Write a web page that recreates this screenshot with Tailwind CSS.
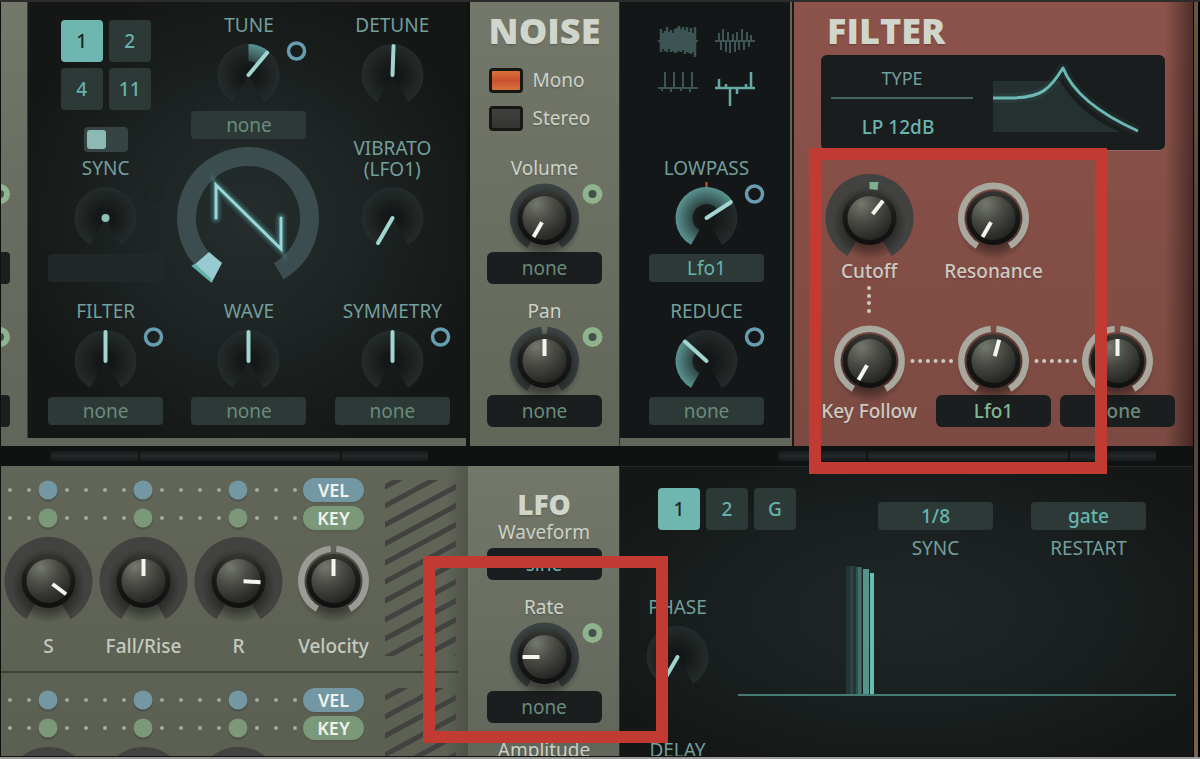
<!DOCTYPE html>
<html lang="en">
<head>
  <meta charset="UTF-8" />
  <meta name="viewport" content="width=device-width, initial-scale=1" />
  <title>Synth - Noise, Filter & LFO</title>
  <script src="https://cdn.jsdelivr.net/npm/@tailwindcss/browser@4"></script>
</head>
<body class="h-screen overflow-hidden bg-[#0e1010] font-['Noto_Sans','Open_Sans',sans-serif] text-[19px] leading-6">

  <!-- Shared gradients -->
  <svg class="absolute w-0 h-0" aria-hidden="true">
    <defs>
      <radialGradient id="glass" gradientUnits="userSpaceOnUse" cx="0" cy="0" r="31">
        <stop offset="0.25" stop-color="#141717" /><stop offset="1" stop-color="#252c2b" />
      </radialGradient>
      <radialGradient id="glow" gradientUnits="userSpaceOnUse" cx="0" cy="0" r="31">
        <stop offset="0.4" stop-color="#2b3f3e" /><stop offset="1" stop-color="#5a9492" />
      </radialGradient>
      <radialGradient id="cap" gradientUnits="userSpaceOnUse" cx="-8" cy="-14" r="36">
        <stop offset="0" stop-color="#74786d" /><stop offset="0.5" stop-color="#484a44" /><stop offset="1" stop-color="#272825" />
      </radialGradient>
      <radialGradient id="shade" gradientUnits="userSpaceOnUse" cx="0" cy="5" r="37">
        <stop offset="0.65" stop-color="#0c0d0c" stop-opacity="0.75" /><stop offset="1" stop-color="#0c0d0c" stop-opacity="0" />
      </radialGradient>
      <linearGradient id="rim" x1="0" y1="0" x2="0" y2="1">
        <stop offset="0" stop-color="#363632" /><stop offset="0.4" stop-color="#1b1b19" /><stop offset="1" stop-color="#0f100f" />
      </linearGradient>
    </defs>
  </svg>

  <div class="relative h-screen flex flex-col border-t-2 border-b-2 border-t-[#2b2c2b] border-b-[#9a9b99]">
    <div class="flex-1 min-h-0 flex pl-px">
      <main class="flex-1 min-w-0 flex flex-col">

        <!-- Upper row -->
        <div class="flex shrink-0 h-[444px]">

          <!-- Oscillator -->
          <section class="w-[469px] shrink-0 flex pb-2 border-r-4 border-[#121413] bg-linear-to-b from-[#74786b] via-[#686c60] to-[#62665a]">
            <div class="w-[27px] shrink-0 overflow-hidden border-r border-[#3a3d37]">
              <svg width="27" height="436" viewBox="0 0 27 436">
                <circle cx="-1" cy="192" r="7" fill="#44504a" stroke="#90b48e" stroke-width="6" />
                <rect x="-20" y="250" width="29" height="32" rx="4" fill="#1b1f1f" />
                <circle cx="-1" cy="335" r="7" fill="#44504a" stroke="#90b48e" stroke-width="6" />
                <rect x="-20" y="393" width="29" height="32" rx="4" fill="#1b1f1f" />
              </svg>
            </div>
            <div class="flex-1 grid grid-cols-3 pl-[6px] pr-[2px] pt-[11px] text-[#739f9d] bg-[radial-gradient(ellipse_at_center,#252e2d_0%,#1e2524_35%,#141716_78%)]">
              <div class="flex flex-col items-center">
                <div class="h-[143px] pt-[7px] flex flex-col items-center">
                  <div class="grid grid-cols-2 gap-[6px] font-medium text-[#65b2ab]">
                    <button class="size-[42px] rounded bg-[#6fb6b1] text-[#1c2625]">1</button>
                    <button class="size-[42px] rounded bg-[#2c3937]">2</button>
                    <button class="size-[42px] rounded bg-[#2c3937]">4</button>
                    <button class="size-[42px] rounded bg-[#2c3937]">11</button>
                  </div>
                  <label class="mt-[17px] relative block w-11 h-[25px] rounded bg-[#364443] p-[3px]">
                    <input type="checkbox" aria-label="Sync" class="appearance-none block size-[19px] rounded-[3px] bg-[#8db9b4]" />
                  </label>
                </div>
                <label class="flex flex-col items-center text-center"><span class="h-6">SYNC</span>
                  <span class="knob relative block" data-kind="dot" data-angle="0"></span></label>
                <div class="w-[115px] h-7 rounded bg-[#212928]"></div>
                <div class="h-[17px]"></div>
                <label class="flex flex-col items-center"><span class="h-6">FILTER</span>
                  <span class="knob relative block" data-kind="glass" data-angle="0" data-ring="blue"></span></label>
                <select aria-label="Filter modulation" class="appearance-none w-[115px] h-7 rounded bg-[#2c3937] text-[#6b8b7a] text-center [text-align-last:center]"><option>none</option></select>
              </div>
              <div class="flex flex-col items-center">
                <label class="flex flex-col items-center"><span class="h-6">TUNE</span>
                  <span class="knob relative block" data-kind="glass" data-angle="40" data-from="0" data-ring="blue"></span></label>
                <select aria-label="Tune modulation" class="appearance-none w-[115px] h-7 rounded bg-[#2c3937] text-[#6b8b7a] text-center [text-align-last:center]"><option>none</option></select>
                <!-- Wave shape dial -->
                <svg class="block shrink-0" width="143" height="160" viewBox="-71 -79 143 160">
                  <path d="M-35.5 61.5A71 71 0 1 1 35.5 61.5L26 45A52 52 0 1 0 -26 45Z" fill="#3b4d4e" />
                  <path d="M-39 34L-26 45L-36 64L-55 48Z" fill="#97cbcf" />
                  <path d="M-55 48L-36 64L-38 61L-53 47Z" stroke="#5fb3a8" stroke-width="2" fill="none" />
                  <g fill="none" stroke-linecap="round">
                    <path d="M-32 0V-33L33 31V0" stroke="#5aa0a4" stroke-opacity="0.15" stroke-width="12" />
                    <path d="M-32 0V-33L33 31V0" stroke="#5aa0a4" stroke-opacity="0.35" stroke-width="7" />
                    <path d="M-32 0V-33L33 31V0" stroke="#9bd6d8" stroke-width="3" />
                  </g>
                </svg>
                <label class="flex flex-col items-center"><span class="h-6">WAVE</span>
                  <span class="knob relative block" data-kind="glass" data-angle="0"></span></label>
                <select aria-label="Wave modulation" class="appearance-none w-[115px] h-7 rounded bg-[#2c3937] text-[#6b8b7a] text-center [text-align-last:center]"><option>none</option></select>
              </div>
              <div class="flex flex-col items-center">
                <label class="h-[143px] flex flex-col items-center"><span class="h-6">DETUNE</span>
                  <span class="knob relative block" data-kind="glass" data-angle="2"></span></label>
                <label class="h-[143px] flex flex-col items-center">
                  <span class="h-6 flex flex-col justify-end text-center leading-[21px]"><span>VIBRATO</span><span>(LFO1)</span></span>
                  <span class="knob relative block" data-kind="glass" data-angle="-150"></span></label>
                <label class="flex flex-col items-center"><span class="h-6">SYMMETRY</span>
                  <span class="knob relative block" data-kind="glass" data-angle="0" data-ring="blue"></span></label>
                <select aria-label="Symmetry modulation" class="appearance-none w-[115px] h-7 rounded bg-[#2c3937] text-[#6b8b7a] text-center [text-align-last:center]"><option>none</option></select>
              </div>
            </div>
          </section>

          <!-- Noise -->
          <section class="w-[150px] shrink-0 flex flex-col items-center pt-[9px] text-[#cdd2c7] text-shadow-sm bg-linear-to-b from-[#74786b] via-[#6b6f62] to-[#626659] border-r border-[#2b2e2a]">
            <h2 class="h-10 font-['Open_Sans'] font-extrabold text-[36px] leading-10 text-[#d0d6cb]">NOISE</h2>
            <div class="w-28 mt-[17px] flex flex-col gap-[14px]">
              <label class="h-6 flex items-center gap-[10px]">
                <input type="radio" name="noise" class="appearance-none w-[34px] h-[25px] rounded border-3 border-[#171714] bg-linear-to-b from-[#d8733a] via-[#c94f30] to-[#d8733a]" checked />Mono</label>
              <label class="h-6 flex items-center gap-[10px]">
                <input type="radio" name="noise" class="appearance-none w-[34px] h-[25px] rounded border-3 border-[#171714] bg-linear-to-b from-[#40403e] to-[#343432]" />Stereo</label>
            </div>
            <label class="mt-[26px] flex flex-col items-center"><span class="h-6">Volume</span>
              <span class="knob relative block" data-kind="dark" data-angle="-150" data-ring="green"></span></label>
            <select aria-label="Volume modulation" class="appearance-none w-[115px] h-8 rounded-md bg-[#1a1e1e] text-[#6b8b7a] text-center [text-align-last:center]"><option>none</option></select>
            <label class="mt-[15px] flex flex-col items-center"><span class="h-6">Pan</span>
              <span class="knob relative block" data-kind="dark" data-angle="0" data-split data-ring="green"></span></label>
            <select aria-label="Pan modulation" class="appearance-none w-[115px] h-8 rounded-md bg-[#1a1e1e] text-[#6b8b7a] text-center [text-align-last:center]"><option>none</option></select>
          </section>

          <!-- Noise colour -->
          <section class="w-[174px] shrink-0 pb-2 pr-[2px] border-r-2 border-[#1c1615] bg-[#62665a]">
            <div class="h-full flex flex-col items-center pt-[19px] pl-[3px] bg-[#141717] text-[#739f9d]">
              <div class="grid grid-cols-2 gap-x-[17px] gap-y-[7px] text-[#3c5453]">
                <button aria-label="White noise"><svg class="block" width="40" height="40" viewBox="-20 -20 40 40" stroke="currentColor" fill="none" stroke-width="2">
                  <path d="M-20 0H20" />
                  <path stroke-width="2.500" d="M-17 -12V11M-15 -8V8M-13 -10V10M-11 -14V11M-9 -9V8M-7 -11V11M-5 -8V10M-3 -12V12M-1 -13V11M1 -15V10M3 -12V11M5 -14V9M7 -11V13M9 -14V11M11 -9V12M13 -13V13M15 -8V11M17 -14V16" />
                </svg></button>
                <button aria-label="Pink noise"><svg class="block" width="40" height="40" viewBox="-20 -20 40 40" stroke="currentColor" fill="none" stroke-width="2">
                  <path d="M-20 0H20" />
                  <path d="M-16 0V-8M-14 0V9M-12 0V-12M-9 0V11M-7 0V-9M-5 0V12M-2 0V-7M0 0V11M2 0V-9M4 0V9M7 0V-12M9 0V9M12 0V-9M14 0V6M16 0V-6" />
                </svg></button>
                <button aria-label="Crackle"><svg class="block" width="40" height="40" viewBox="-20 -20 40 40" stroke="currentColor" fill="none" stroke-width="2">
                  <path d="M-20 0H20M-13 0V-16M-4 0V-16M5 0V-16M14 0V-16M-16 0V3M-7 0V4M3 0V3M12 0V4" />
                </svg></button>
                <button aria-label="Dust" class="text-[#64aaa5]"><svg class="block" width="40" height="40" viewBox="-20 -20 40 40" stroke="currentColor" fill="none" stroke-width="2">
                  <path d="M-20 0H20M-16 0V-9M-9 0V-4M-5 0V18M2 0V6M11 0V-4M16 0V-16" stroke-width="2.500" />
                </svg></button>
              </div>
              <label class="mt-[48px] flex flex-col items-center"><span class="h-6">LOWPASS</span>
                <span class="knob relative block" data-kind="glass" data-angle="57" data-from="-150" data-tick data-ring="blue"></span></label>
              <select aria-label="Lowpass modulation" class="appearance-none w-[115px] h-7 shrink-0 rounded bg-[#2c3937] text-[#67b5ae] text-center [text-align-last:center]"><option>Lfo1</option></select>
              <label class="mt-[17px] flex flex-col items-center"><span class="h-6">REDUCE</span>
                <span class="knob relative block" data-kind="glass" data-angle="-48" data-from="-150" data-ring="blue"></span></label>
              <select aria-label="Reduce modulation" class="appearance-none w-[115px] h-7 shrink-0 rounded bg-[#2c3937] text-[#6b8b7a] text-center [text-align-last:center]"><option>none</option></select>
            </div>
          </section>

          <!-- Filter -->
          <section class="flex-1 min-w-0 pt-[9px] text-[#cdcac4] text-shadow-sm bg-[linear-gradient(to_right,transparent_93%,#00000070),linear-gradient(#8c534b,#7c4a42)]">
            <h2 class="h-10 pl-[33px] font-['Open_Sans'] font-extrabold text-[36px] leading-10 text-[#d0d6cb]">FILTER</h2>
            <div class="mt-1 ml-[27px] mr-[28px] h-24 rounded-md pl-[10px] pr-[15px] flex justify-between bg-[#191d1d] border-b border-[#9a6a60] text-shadow-none">
              <div class="w-[142px] flex flex-col text-center text-[#67b5ae]">
                <span class="h-11 leading-[46px] text-[18px] text-[#739f9d] border-b-2 border-[#466562]">TYPE</span>
                <select aria-label="Filter type" class="appearance-none mt-4 mr-2 h-6 font-medium text-center [text-align-last:center]"><option>LP 12dB</option></select>
              </div>
              <svg class="block" width="170" height="95" viewBox="0 0 170 95">
                <path d="M13 26H80Q100 60 140 77H13Z" fill="#243130" />
                <g fill="none">
                  <path d="M13 43H30C62 43 70 34 83 13C92 36 118 58 158 76" stroke="#4a8b88" stroke-opacity="0.1" stroke-width="10" stroke-linejoin="round" />
                  <path d="M13 43H30C62 43 70 34 83 13C92 36 118 58 158 76" stroke="#6bb9b4" stroke-width="3" stroke-linejoin="round" />
                </g>
              </svg>
            </div>
            <div class="mt-[17px] mx-[13px] grid grid-cols-3 justify-items-center font-medium">
              <label class="flex flex-col items-center"><span class="knob relative block" data-kind="wide" data-angle="38" data-mark></span>
                <span class="h-6">Cutoff</span></label>
              <label class="flex flex-col items-center"><span class="knob relative block" data-kind="light-tall" data-angle="-150"></span>
                <span class="h-6">Resonance</span></label>
              <span></span>
              <svg class="block" width="4" height="40" viewBox="0 0 4 40" fill="#c9cbc2">
                <circle cx="2" cy="5" r="2" /><circle cx="2" cy="13" r="2" /><circle cx="2" cy="20" r="2" /><circle cx="2" cy="28" r="2" />
              </svg>
              <span></span>
              <span></span>
              <label class="flex flex-col items-center"><span class="knob relative block" data-kind="light" data-angle="-150" data-dots></span>
                <span class="h-8 leading-8 whitespace-nowrap">Key Follow</span></label>
              <div class="flex flex-col items-center"><span class="knob relative block" data-kind="light" data-angle="15" data-split data-dots></span>
                <select aria-label="Filter modulation source" class="appearance-none w-[115px] h-8 rounded-md bg-[#1a1e1e] text-[#85b591] text-center [text-align-last:center]"><option>Lfo1</option></select></div>
              <div class="flex flex-col items-center"><span class="knob relative block" data-kind="light" data-angle="0" data-split></span>
                <select aria-label="Second modulation source" class="appearance-none w-[115px] h-8 rounded-md bg-[#1a1e1e] text-[#6b8b7a] text-center [text-align-last:center]"><option>none</option></select></div>
            </div>
          </section>
        </div>

        <!-- Rail -->
        <div class="h-5 shrink-0 flex items-center justify-between pl-[50px] pr-[37px] bg-[#101212]">
          <div class="flex gap-[2px]">
            <span class="w-[87px] h-[10px] bg-linear-to-b from-[#15191a] via-[#22282a] to-[#15191a]"></span>
            <span class="w-[200px] h-[10px] bg-linear-to-b from-[#15191a] via-[#252b2d] to-[#15191a]"></span>
            <span class="w-[86px] h-[10px] bg-linear-to-b from-[#15191a] via-[#22282a] to-[#15191a]"></span>
          </div>
          <div class="flex gap-[2px]">
            <span class="w-[87px] h-[10px] bg-linear-to-b from-[#15191a] via-[#22282a] to-[#15191a]"></span>
            <span class="w-[200px] h-[10px] bg-linear-to-b from-[#15191a] via-[#252b2d] to-[#15191a]"></span>
            <span class="w-[86px] h-[10px] bg-linear-to-b from-[#15191a] via-[#22282a] to-[#15191a]"></span>
          </div>
        </div>

        <!-- Lower row -->
        <div class="flex-1 min-h-0 flex overflow-hidden border-b border-[#121413]">

          <!-- Envelopes -->
          <section class="w-[467px] shrink-0 pr-[10px] bg-[linear-gradient(to_right,transparent_95%,#00000028),linear-gradient(#626659,#5c6053)] text-[#c3cbc1]">
            <div class="flex h-[207px] pt-3 border-b-2 border-[#40423f]">
              <div class="w-[380px] flex flex-col gap-1">
                <div class="matrix grid grid-cols-4 h-6" data-name="VEL" data-color="#7498a3"></div>
                <div class="matrix grid grid-cols-4 h-6" data-name="KEY" data-color="#7b9878"></div>
                <div class="grid grid-cols-4 justify-items-center font-medium">
                  <label class="flex flex-col items-center"><span class="knob relative block" data-kind="envelope" data-angle="127"></span>S</label>
                  <label class="flex flex-col items-center"><span class="knob relative block" data-kind="envelope" data-angle="0"></span>Fall/Rise</label>
                  <label class="flex flex-col items-center"><span class="knob relative block" data-kind="envelope" data-angle="93"></span>R</label>
                  <label class="flex flex-col items-center"><span class="knob relative block" data-kind="velocity" data-angle="0" data-split></span>Velocity</label>
                </div>
              </div>
              <svg class="hatch block ml-1 mt-[2px]" width="71" height="176" viewBox="0 0 71 176" data-start="7"></svg>
            </div>
            <div class="flex h-[207px] pt-[15px]">
              <div class="w-[380px] flex flex-col gap-1">
                <div class="matrix grid grid-cols-4 h-6" data-name="VEL" data-color="#7498a3"></div>
                <div class="matrix grid grid-cols-4 h-6" data-name="KEY" data-color="#7b9878"></div>
                <div class="grid grid-cols-4 justify-items-center">
                  <span class="knob relative block" data-kind="envelope" data-angle="0"></span>
                  <span class="knob relative block" data-kind="envelope" data-angle="0"></span>
                  <span class="knob relative block" data-kind="envelope" data-angle="0"></span>
                  <span class="knob relative block" data-kind="velocity" data-angle="0" data-split></span>
                </div>
              </div>
              <svg class="hatch block ml-1" width="71" height="176" viewBox="0 0 71 176" data-start="10"></svg>
            </div>
          </section>

          <!-- LFO -->
          <section class="w-[152px] shrink-0 flex flex-col items-center pl-px pt-[22px] text-[#cdd2c7] text-shadow-sm bg-linear-to-b from-[#74786b] to-[#62665a] border-r border-[#2b2e2a]">
            <h2 class="h-8 shrink-0 font-['Open_Sans'] font-extrabold text-[28px] leading-8 text-[#d0d6cb]">LFO</h2>
            <label for="waveform" class="h-6 shrink-0">Waveform</label>
            <select id="waveform" class="appearance-none mt-[4px] w-[115px] h-8 shrink-0 rounded-md bg-[#1a1e1e] text-[#67b5ae] text-center [text-align-last:center]"><option>sine</option></select>
            <label class="mt-[15px] flex flex-col items-center"><span class="h-6">Rate</span>
              <span class="knob relative block" data-kind="dark" data-angle="-90" data-ring="green"></span></label>
            <select aria-label="Rate modulation" class="appearance-none w-[115px] h-8 shrink-0 rounded-md bg-[#1a1e1e] text-[#6b8b7a] text-center [text-align-last:center]"><option>none</option></select>
            <span class="mt-[15px] h-6 shrink-0">Amplitude</span>
          </section>

          <!-- LFO display -->
          <section class="flex-1 min-w-0 border-t border-[#252827] text-[#739f9d] bg-[radial-gradient(ellipse_at_center,#1f2726_0%,#1a2020_45%,#141716_85%)]">
            <div class="h-[93px] flex justify-between pl-[38px] pr-[47px]">
              <div class="pt-[21px] flex gap-[6px] font-medium text-[#65b2ab]">
                <button class="size-[42px] rounded bg-[#6fb6b1] text-[#1c2625]">1</button>
                <button class="size-[42px] rounded bg-[#2c3937]">2</button>
                <button class="size-[42px] rounded bg-[#2c3937]">G</button>
              </div>
              <div class="pt-[35px] flex gap-[38px]">
                <div class="flex flex-col items-center gap-[6px]">
                  <select id="lfo-sync" class="appearance-none w-[115px] h-7 rounded bg-[#2c3937] font-medium text-[#67b5ae] text-center [text-align-last:center]"><option>1/8</option></select>
                  <label for="lfo-sync">SYNC</label>
                </div>
                <div class="flex flex-col items-center gap-[6px]">
                  <select id="lfo-restart" class="appearance-none w-[115px] h-7 rounded bg-[#2c3937] font-medium text-[#67b5ae] text-center [text-align-last:center]"><option>gate</option></select>
                  <label for="lfo-restart">RESTART</label>
                </div>
              </div>
            </div>
            <div class="flex pr-[17px]">
              <div class="w-[115px] pt-[35px] flex flex-col items-center">
                <label class="h-[143px] flex flex-col items-center"><span class="h-6">PHASE</span>
                  <span class="knob relative block" data-kind="glass" data-angle="-150"></span></label>
                <span class="h-6">DELAY</span>
              </div>
              <div class="ml-[3px] flex-1 h-[136px] flex items-end pl-[108px] border-b-2 border-[#467a74]">
                <svg class="block" width="28" height="129" viewBox="0 0 28 129">
                  <rect x="0" y="1" width="10" height="128" fill="#243634" />
                  <rect x="4" y="1" width="3" height="128" fill="#2c4744" />
                  <rect x="10" y="2" width="6" height="127" fill="#2f504c" />
                  <rect x="12" y="2" width="3" height="127" fill="#42716b" />
                  <rect x="17" y="4" width="6" height="125" fill="#55958c" />
                  <rect x="24" y="8" width="4" height="121" fill="#6abcb1" />
                </svg>
              </div>
            </div>
          </section>
        </div>
      </main>

      <!-- Wooden side -->
      <aside class="w-[7px] shrink-0 border-l border-r-2 border-black bg-linear-to-b from-[#66563f] via-[#4c3e30] to-[#79644e]"></aside>
    </div>

    <!-- Callouts -->
    <div class="absolute left-[809px] top-[146px] w-[298px] h-[326px] border-12 border-[#c23b33] pointer-events-none"></div>
    <div class="absolute left-[423px] top-[554px] w-[245px] h-[187px] border-12 border-[#c23b33] pointer-events-none"></div>
  </div>

  <script>
    // viewBox of each knob: [top, height]
    const boxes = {
      glass: [-38, 74], dot: [-38, 74], dark: [-38, 72], light: [-38, 72],
      wide: [-50, 91], "light-tall": [-50, 91], envelope: [-47, 100], velocity: [-47, 100]
    };

    function point(r, deg) {
      const a = deg * Math.PI / 180;
      return `${(r * Math.sin(a)).toFixed(2)} ${(-r * Math.cos(a)).toFixed(2)}`;
    }

    // Ring segment between two radii and two angles, 0 is straight up
    function segment(inner, outer, from, to) {
      const large = to - from > 180 ? 1 : 0;
      return `M${point(outer, from)}A${outer} ${outer} 0 ${large} 1 ${point(outer, to)}` +
        `L${point(inner, to)}A${inner} ${inner} 0 ${large} 0 ${point(inner, from)}Z`;
    }

    function band(inner, outer, color, split) {
      if (!split) return `<path d="${segment(inner, outer, -150, 150)}" fill="${color}"/>`;
      return `<path d="${segment(inner, outer, -150, -5)}${segment(inner, outer, 5, 150)}" fill="${color}"/>`;
    }

    function drawKnob(el) {
      const { kind, angle, from, ring, split, mark, tick, dots } = el.dataset;
      const [top, height] = boxes[kind];
      const isSplit = split !== undefined;
      let s = "";
      if (kind === "glass" || kind === "dot") {
        s += `<path d="${segment(0, 31, -150, 150)}" fill="url(#glass)"/>`;
        if (from !== undefined) s += `<path d="${segment(14, 31, Number(from), Number(angle))}" fill="url(#glow)"/>`;
        if (tick !== undefined) s += `<path d="M0 -36V-31" stroke="#b4623c" stroke-width="2"/>`;
        s += kind === "dot"
          ? `<circle r="4" fill="#8fbdb8"/><circle cx="48" cy="-24" r="8" fill="none" stroke="#1e2323" stroke-width="3"/>`
          : `<path class="pointer" d="M0 0V-29" transform="rotate(${angle})" stroke="#a1d5d1" stroke-width="4" stroke-linecap="round"/>`;
      } else {
        const light = kind === "velocity" ? "#9a9b95" : "#a9a89e";
        if (kind === "dark") s += band(24, 34.5, "#3b4342", isSplit);
        if (kind === "wide" || kind === "envelope") s += band(24, 44, "#424240", false);
        s += `<circle cy="5" r="37" fill="url(#shade)" opacity="0.6"/>`;
        if (kind.startsWith("light") || kind === "velocity") s += band(29, 35.5, light, isSplit);
        s += `<circle r="27" fill="url(#rim)"/><circle r="22" fill="url(#cap)"/>`;
        if (mark !== undefined) s += `<path d="M0 -36H9L8 -28L0 -29Z" fill="#7db08b"/>`;
        s += `<path class="pointer" d="M0 -22V-5" transform="rotate(${angle})" stroke="#f4f5ee" stroke-width="4"/>`;
      }
      if (ring === "blue") s += `<circle cx="48" cy="-24" r="8" fill="none" stroke="#679db0" stroke-width="3.5"/>`;
      if (ring === "green") s += `<circle cx="48" cy="-24" r="7" fill="#44504a" stroke="#8fb38d" stroke-width="6"/>`;
      if (dots !== undefined) {
        for (let i = 0; i < 6; i++) s += `<circle cx="${43 + i * 7.7}" cy="0" r="2" fill="#c9cbc2"/>`;
      }
      const width = kind === "envelope" || kind === "velocity" ? 95 : 115;
      el.innerHTML = `<svg class="block overflow-visible" width="${width}" height="${height}" viewBox="${-width / 2} ${top} ${width} ${height}">${s}</svg>
        <input type="range" min="-150" max="150" value="${angle}" aria-label="Amount" class="absolute inset-0 w-full h-full opacity-0">`;
      el.querySelector("input").addEventListener("input", function (e) {
        const pointer = el.querySelector(".pointer");
        if (pointer) pointer.setAttribute("transform", `rotate(${e.target.value})`);
      });
    }

    function drawMatrix(el) {
      const { name, color } = el.dataset;
      const dot = x => `<circle cx="${x}" cy="12" r="2" fill="#a5a89d"/>`;
      const cell = `<svg class="block w-full h-6" viewBox="0 0 95 24">${dot(9)}${dot(28)}
        <circle cx="47" cy="14" r="10" fill="#000" opacity="0.15"/><circle cx="47" cy="12" r="9.5" fill="${color}"/>${dot(66)}${dot(85)}</svg>`;
      el.innerHTML = cell.repeat(3) + `<div class="relative flex justify-center">
        <svg class="absolute left-0 top-0" width="16" height="24">${dot(9)}</svg>
        <button class="relative w-[61px] h-6 rounded-full text-[18px] leading-6 font-semibold text-[#eef1ec] shadow" style="background:${color}">${name}</button></div>`;
    }

    function drawHatch(el) {
      let d = "";
      for (let y = Number(el.dataset.start); y < 230; y += 19) d += `M-4 ${y + 2}L76 ${y - 41}`;
      el.innerHTML = `<path d="${d}" stroke="#424341" stroke-width="5"/>`;
    }

    document.querySelectorAll(".knob").forEach(drawKnob);
    document.querySelectorAll(".matrix").forEach(drawMatrix);
    document.querySelectorAll(".hatch").forEach(drawHatch);
  </script>
</body>
</html>
